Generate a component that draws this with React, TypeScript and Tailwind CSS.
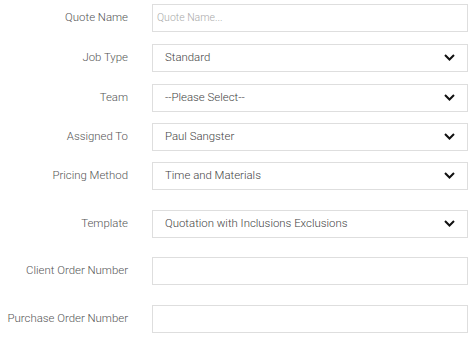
import React from 'react';

type Field = {
  label: string;
  kind: 'input' | 'select';
  value?: string;
  placeholder?: string;
  gap: string;
};

const fields: Field[] = [
  { label: 'Quote Name', kind: 'input', placeholder: 'Quote Name...', gap: 'mt-[4px]' },
  { label: 'Job Type', kind: 'select', value: 'Standard', gap: 'mt-[12px]' },
  { label: 'Team', kind: 'select', value: '--Please Select--', gap: 'mt-[12px]' },
  { label: 'Assigned To', kind: 'select', value: 'Paul Sangster', gap: 'mt-[11px]' },
  { label: 'Pricing Method', kind: 'select', value: 'Time and Materials', gap: 'mt-[11px]' },
  { label: 'Template', kind: 'select', value: 'Quotation with Inclusions Exclusions', gap: 'mt-[20px]' },
  { label: 'Client Order Number', kind: 'input', gap: 'mt-[19px]' },
  { label: 'Purchase Order Number', kind: 'input', gap: 'mt-[20px]' },
];

function Chevron() {
  return (
    <svg width="11" height="7" viewBox="0 0 11 7" className="shrink-0">
      <polyline points="1,1 5.5,5.5 10,1" fill="none" stroke="#111" strokeWidth="2" />
    </svg>
  );
}

export default function App() {
  return (
    <div className="w-[474px] h-[338px] bg-white font-['Roboto',sans-serif] text-[11.4px] font-light text-[#555]">
      <div className="flex flex-col">
        {fields.map((f) => (
          <div key={f.label} className={`flex items-center ${f.gap}`}>
            <div className="w-[128px] shrink-0 whitespace-nowrap text-right leading-none">{f.label}</div>
            <div className="ml-[24px] w-[316px] h-[28px] border border-[#dedede] bg-white flex items-center">
              {f.kind === 'select' ? (
                <div className="flex flex-1 items-center justify-between pl-[12px] pr-[12px]">
                  <span className="text-[#444]">{f.value}</span>
                  <Chevron />
                </div>
              ) : (
                <span className="pl-[4px] text-[10.5px] text-[#aaa]">{f.placeholder}</span>
              )}
            </div>
          </div>
        ))}
      </div>
    </div>
  );
}
